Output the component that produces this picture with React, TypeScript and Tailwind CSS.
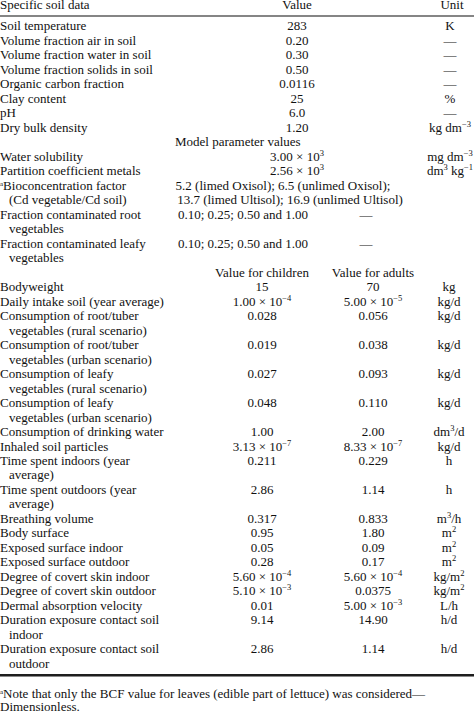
import type { ReactNode } from 'react';

type Lines = ReactNode[];

function Sup({ children }: { children: ReactNode }) {
  return <sup className="-top-[5px] text-[8.5px]">{children}</sup>;
}

function Sci({ m, e }: { m: string; e: string }) {
  return (
    <>
      {m} × 10<Sup>{e}</Sup>
    </>
  );
}

function Label({ lines, className = '' }: { lines: Lines; className?: string }) {
  return (
    <div className={`shrink-0 whitespace-nowrap ${className}`}>
      {lines.map((l, i) => (
        <div key={i} className={i > 0 ? 'pl-[9px]' : ''}>
          {l}
        </div>
      ))}
    </div>
  );
}

const soilRows: [string, ReactNode, ReactNode][] = [
  ['Soil temperature', '283', 'K'],
  ['Volume fraction air in soil', '0.20', '—'],
  ['Volume fraction water in soil', '0.30', '—'],
  ['Volume fraction solids in soil', '0.50', '—'],
  ['Organic carbon fraction', '0.0116', '—'],
  ['Clay content', '25', '%'],
  ['pH', '6.0', '—'],
  ['Dry bulk density', '1.20', <>kg dm<Sup>−3</Sup></>],
];

const modelRows: [string, ReactNode, ReactNode][] = [
  ['Water solubility', <Sci m="3.00" e="3" />, <>mg dm<Sup>−3</Sup></>],
  ['Partition coefficient metals', <Sci m="2.56" e="3" />, <>dm<Sup>3</Sup> kg<Sup>−1</Sup></>],
];

const fractionRows: Lines[] = [
  ['Fraction contaminated root', 'vegetables'],
  ['Fraction contaminated leafy', 'vegetables'],
];

const exposureRows: [Lines, ReactNode, ReactNode, ReactNode][] = [
  [['Bodyweight'], '15', '70', 'kg'],
  [['Daily intake soil (year average)'], <Sci m="1.00" e="−4" />, <Sci m="5.00" e="−5" />, 'kg/d'],
  [['Consumption of root/tuber', 'vegetables (rural scenario)'], '0.028', '0.056', 'kg/d'],
  [['Consumption of root/tuber', 'vegetables (urban scenario)'], '0.019', '0.038', 'kg/d'],
  [['Consumption of leafy', 'vegetables (rural scenario)'], '0.027', '0.093', 'kg/d'],
  [['Consumption of leafy', 'vegetables (urban scenario)'], '0.048', '0.110', 'kg/d'],
  [['Consumption of drinking water'], '1.00', '2.00', <>dm<Sup>3</Sup>/d</>],
  [['Inhaled soil particles'], <Sci m="3.13" e="−7" />, <Sci m="8.33" e="−7" />, 'kg/d'],
  [['Time spent indoors (year', 'average)'], '0.211', '0.229', 'h'],
  [['Time spent outdoors (year', 'average)'], '2.86', '1.14', 'h'],
  [['Breathing volume'], '0.317', '0.833', <>m<Sup>3</Sup>/h</>],
  [['Body surface'], '0.95', '1.80', <>m<Sup>2</Sup></>],
  [['Exposed surface indoor'], '0.05', '0.09', <>m<Sup>2</Sup></>],
  [['Exposed surface outdoor'], '0.28', '0.17', <>m<Sup>2</Sup></>],
  [['Degree of covert skin indoor'], <Sci m="5.60" e="−4" />, <Sci m="5.60" e="−4" />, <>kg/m<Sup>2</Sup></>],
  [['Degree of covert skin outdoor'], <Sci m="5.10" e="−3" />, '0.0375', <>kg/m<Sup>2</Sup></>],
  [['Dermal absorption velocity'], '0.01', <Sci m="5.00" e="−3" />, 'L/h'],
  [['Duration exposure contact soil', 'indoor'], '9.14', '14.90', 'h/d'],
  [['Duration exposure contact soil', 'outdoor'], '2.86', '1.14', 'h/d'],
];

function SoilRow({ label, value, unit }: { label: ReactNode; value: ReactNode; unit: ReactNode }) {
  return (
    <div className="flex items-start whitespace-nowrap">
      <Label lines={[label]} className="w-[180px]" />
      <div className="w-[234px] shrink-0 text-center">{value}</div>
      <div className="ml-[12px] w-[48px] shrink-0 text-center">{unit}</div>
    </div>
  );
}

export default function App() {
  return (
    <div className="h-[713px] w-[474px] overflow-hidden bg-white font-['Liberation_Serif','Times_New_Roman',serif] text-[13px] leading-[14.49px] text-[#111]">
      {/* header */}
      <div className="-mt-[2px] flex whitespace-nowrap">
        <div className="w-[180px] shrink-0">Specific soil data</div>
        <div className="w-[234px] shrink-0 text-center">Value</div>
        <div className="ml-[12px] w-[48px] shrink-0 pl-[4px] text-center">Unit</div>
      </div>
      <div className="mt-[2.5px] h-[1.8px] bg-[#858585]" />

      <div className="mt-[2.7px]">
        {soilRows.map(([l, v, u]) => (
          <SoilRow key={l} label={l} value={v} unit={u} />
        ))}

        <div className="pl-[175px] whitespace-nowrap">Model parameter values</div>

        {modelRows.map(([l, v, u]) => (
          <SoilRow key={l} label={l} value={v} unit={u} />
        ))}

        {/* bioconcentration factor */}
        <div className="flex items-start whitespace-nowrap">
          <Label
            className="w-[170px]"
            lines={[
              <>
                <sup className="-top-[4px] text-[7px]">a</sup>Bioconcentration factor
              </>,
              '(Cd vegetable/Cd soil)',
            ]}
          />
          <div className="flex w-[240px] shrink-0 flex-col items-center">
            <div className="pr-[14px]">5.2 (limed Oxisol); 6.5 (unlimed Oxisol);</div>
            <div>13.7 (limed Ultisol); 16.9 (unlimed Ultisol)</div>
          </div>
        </div>

        {fractionRows.map((lines, i) => (
          <div key={i} className="flex items-start whitespace-nowrap">
            <Label lines={lines} className="w-[178px]" />
            <div className="w-[150px] shrink-0">0.10; 0.25; 0.50 and 1.00</div>
            <div className="w-[76px] shrink-0 text-center">—</div>
          </div>
        ))}

        <div className="flex whitespace-nowrap">
          <div className="w-[200px] shrink-0" />
          <div className="w-[124px] shrink-0 text-center">Value for children</div>
          <div className="w-[98px] shrink-0 text-center">Value for adults</div>
        </div>

        {exposureRows.map(([lines, c, a, u], i) => (
          <div key={i} className="flex items-start whitespace-nowrap">
            <Label lines={lines} className="w-[200px]" />
            <div className="w-[124px] shrink-0 text-center">{c}</div>
            <div className="w-[98px] shrink-0 text-center">{a}</div>
            <div className="w-[54px] shrink-0 text-center">{u}</div>
          </div>
        ))}
      </div>

      <div className="mt-[3px] h-[1.6px] bg-[#1e1e1e]" />
      <div className="h-[0.9px] bg-[#8a8a8a]" />

      <p className="mt-[10px] whitespace-nowrap leading-[13.3px]">
        <sup className="-top-[4px] text-[7px]">a</sup>Note that only the BCF value for leaves (edible part of lettuce) was considered—
        <br />
        Dimensionless.
      </p>
    </div>
  );
}
